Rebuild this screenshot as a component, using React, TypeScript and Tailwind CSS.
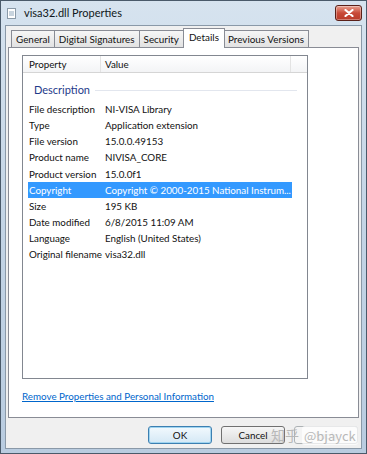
import React from "react";

const rows: [string, string][] = [
  ["File description", "NI-VISA Library"],
  ["Type", "Application extension"],
  ["File version", "15.0.0.49153"],
  ["Product name", "NIVISA_CORE"],
  ["Product version", "15.0.0f1"],
  ["Copyright", "Copyright \u00a9 2000-2015 National Instrum..."],
  ["Size", "195 KB"],
  ["Date modified", "6/8/2015 11:09 AM"],
  ["Language", "English (United States)"],
  ["Original filename", "visa32.dll"],
];

const tabs = ["General", "Digital Signatures", "Security", "Details", "Previous Versions"];

const font = { fontFamily: 'Lato, "Noto Sans", sans-serif' };

export default function App() {
  return (
    <div
      className="relative flex h-[454px] w-[367px] flex-col overflow-hidden border border-[#4a5a6a] bg-gradient-to-b from-[#d6e3ef] via-[#c3d4e5] to-[#b9cce0] text-[9.8px] text-[#111]"
      style={font}
    >
      {/* Title bar */}
      <div className="flex h-[24px] shrink-0 items-center pl-[6px] pr-[4px]">
        <div className="flex h-[11px] w-[9px] items-center justify-center border border-[#8a9aa8] bg-white">
          <div className="h-[5px] w-[5px] bg-[#c8d4de]" />
        </div>
        <span className="ml-[8px] text-[11px] text-[#101820]">visa32.dll Properties</span>
        <div className="ml-auto flex h-[16px] w-[27px] items-center justify-center rounded-[3px] border border-[#5a2018] bg-gradient-to-b from-[#e8a090] via-[#c84a38] to-[#b83a28] shadow-[inset_0_0_0_1px_rgba(255,255,255,0.35)]">
          <svg width="10" height="8" viewBox="0 0 10 8">
            <path d="M1.5 1 L8.5 7 M8.5 1 L1.5 7" stroke="white" strokeWidth="2.2" strokeLinecap="round" />
          </svg>
        </div>
      </div>

      {/* Client area */}
      <div className="mx-[4px] mb-[4px] flex flex-1 flex-col border border-[#8a99a8] bg-[#f0f0f0] px-[2px]">
        {/* Tabs */}
        <div className="mt-[2px] flex items-end pl-[3px] text-[9.9px]">
          {tabs.map((t) =>
            t === "Details" ? (
              <div
                key={t}
                className="relative z-10 -mx-[1px] mb-[-1px] flex h-[20px] items-center border border-b-0 border-[#898c95] bg-white px-[5px] pb-[2px]"
              >
                {t}
              </div>
            ) : (
              <div
                key={t}
                className="flex h-[17px] items-center border border-b-0 border-l-0 border-[#898c95] bg-gradient-to-b from-[#f6f6f6] to-[#e2e2e2] px-[4px] first:border-l"
              >
                {t}
              </div>
            )
          )}
        </div>

        {/* Tab panel */}
        <div className="flex h-[371px] flex-col border border-[#898c95] bg-white pl-[13px] pr-[50px] pt-[7px]">
          {/* List view */}
          <div className="flex h-[324px] flex-col border border-[#828790] bg-white">
            <div className="flex h-[17px] shrink-0 items-center border-b border-[#d5d5d5] bg-gradient-to-b from-white to-[#f3f4f6]">
              <div className="flex h-full w-[78px] items-center border-r border-[#e3e3e3] pl-[6px]">Property</div>
              <div className="flex h-full w-[190px] items-center border-r border-[#e3e3e3] pl-[4px]">Value</div>
            </div>
            <div className="flex h-[28px] items-center pl-[11px] pr-[10px] pt-[6px]">
              <span className="text-[11px] text-[#1e3a8a]">Description</span>
              <div className="ml-[5px] h-px flex-1 bg-[#e2e6ee]" />
            </div>
            {rows.map(([k, v]) => (
              <div
                key={k}
                className={
                  k === "Copyright"
                    ? "mx-[5px] mr-[15px] flex h-[16.2px] items-center bg-[#3399ff] text-white"
                    : "mx-[5px] mr-[15px] flex h-[16.2px] items-center"
                }
              >
                <span className="w-[77px] shrink-0 whitespace-nowrap pl-[1px]">{k}</span>
                <span className="whitespace-nowrap">{v}</span>
              </div>
            ))}
          </div>
          <a className="mt-[10px] self-start text-[#0066cc] underline">Remove Properties and Personal Information</a>
        </div>

        {/* Buttons */}
        <div className="mt-[8px] flex justify-end gap-[9px] pr-[1px]">
          <button className="h-[18px] w-[64px] rounded-[3px] border border-[#3c7fb1] bg-gradient-to-b from-[#f2f9fd] to-[#d4e8f5] shadow-[inset_0_0_0_1px_#9fd4f0]">
            OK
          </button>
          <button className="h-[18px] w-[64px] rounded-[3px] border border-[#707070] bg-gradient-to-b from-[#f6f6f6] to-[#dddddd]">
            Cancel
          </button>
          <button className="h-[18px] w-[64px] rounded-[3px] border border-[#adb2b5] bg-[#f4f4f4] text-[#c8c8c8]">
            Apply
          </button>
        </div>
      </div>

      {/* Watermark */}
      <div className="pointer-events-none absolute left-[270px] top-[424px] flex items-center text-[14px] text-[#b8b8b8]" style={{ fontFamily: '"Noto Sans CJK SC", sans-serif' }}>
        <span>知乎</span>
        <span className="ml-[3px] rounded-[3px] bg-white/70 px-[2px] text-[13px]">@bjayck</span>
      </div>
    </div>
  );
}
